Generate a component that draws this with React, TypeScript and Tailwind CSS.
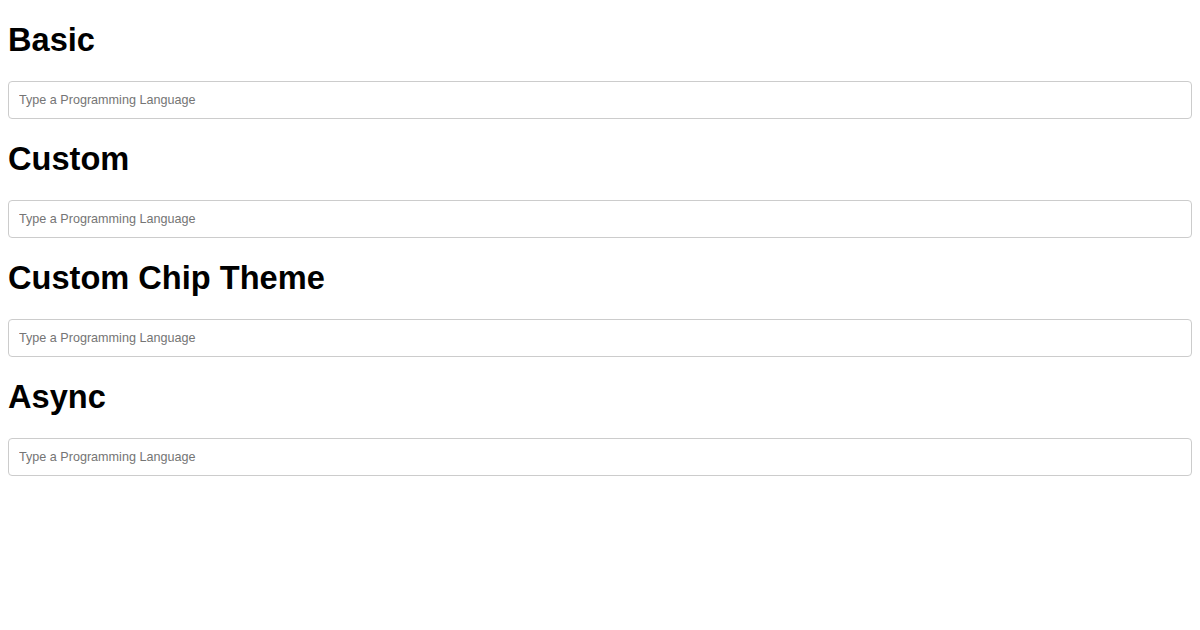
import React from 'react';

const sections = ['Basic', 'Custom', 'Custom Chip Theme', 'Async'];

const App: React.FC = () => {
  return (
    <div className="min-h-screen bg-white px-2 pt-px font-['Liberation_Sans',Arial,sans-serif] text-black">
      {sections.map((title, i) => (
        <div key={title}>
          <h1
            className={`${i === 0 ? 'mt-[20px]' : 'mt-[21px]'} mb-[23px] text-[32.6px] font-bold leading-[37px]`}
          >
            {title}
          </h1>
          <div className="flex h-[38px] w-full items-center rounded-[4px] border border-[#cccccc] bg-white">
            <input
              type="text"
              placeholder="Type a Programming Language"
              className="h-full w-full rounded-[4px] bg-transparent px-[10px] text-[12.6px] text-black outline-none placeholder:text-[#757575]"
            />
          </div>
        </div>
      ))}
    </div>
  );
};

export default App;
